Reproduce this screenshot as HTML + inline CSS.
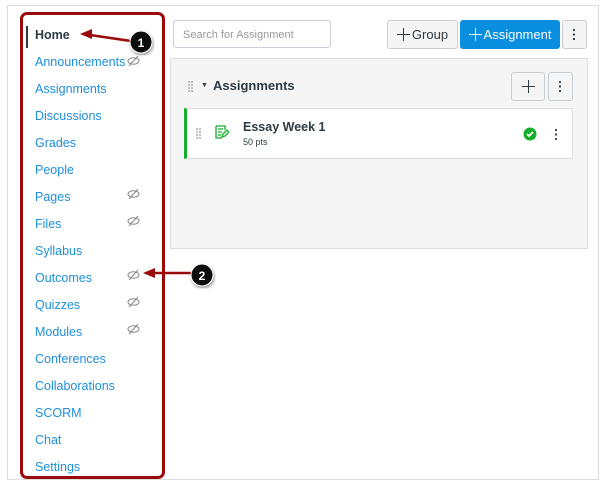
<!DOCTYPE html><html><head><style>
body{margin:0;width:608px;height:483px;background:#fff;font-family:"Liberation Sans",sans-serif;position:relative;overflow:hidden}
.a{position:absolute}
.frame{left:7px;top:5px;width:592px;height:475px;border:1px solid #ddd;box-sizing:border-box}
.red{left:20px;top:12px;width:145px;height:467px;border:3px solid #9b0a0a;border-radius:7px;box-sizing:border-box}
.nav{left:35px;font-size:12.5px;color:#1e8fdc;line-height:16px;top:27px}
.btn{border:1px solid #c7cdd1;background:#f5f5f5;border-radius:3px;box-sizing:border-box;color:#2d3b45;font-size:13px;display:flex;align-items:center;justify-content:center}
</style></head><body>
<div class="a frame"></div>
<div class="a" style="left:26px;top:26px;width:2px;height:22px;background:#2d3b45"></div>
<div class="a nav" style="color:#2d3b45;font-weight:bold">Home</div>
<div class="a nav" style="top:54px">Announcements</div>
<div class="a nav" style="top:81px">Assignments</div>
<div class="a nav" style="top:108px">Discussions</div>
<div class="a nav" style="top:135px">Grades</div>
<div class="a nav" style="top:162px">People</div>
<div class="a nav" style="top:189px">Pages</div>
<div class="a nav" style="top:216px">Files</div>
<div class="a nav" style="top:243px">Syllabus</div>
<div class="a nav" style="top:270px">Outcomes</div>
<div class="a nav" style="top:297px">Quizzes</div>
<div class="a nav" style="top:324px">Modules</div>
<div class="a nav" style="top:351px">Conferences</div>
<div class="a nav" style="top:378px">Collaborations</div>
<div class="a nav" style="top:405px">SCORM</div>
<div class="a nav" style="top:432px">Chat</div>
<div class="a nav" style="top:459px">Settings</div>
<svg class="a" style="left:0;top:0" width="608" height="483">
<defs><g id="eye" fill="none" stroke="#888" stroke-width="1"><ellipse cx="6.5" cy="5" rx="5.5" ry="3.3"/><line x1="2" y1="10" x2="11" y2="0"/></g>
<g id="drag" fill="#777"><circle cx="1" cy="1" r=".8"/><circle cx="4" cy="1" r=".8"/><circle cx="1" cy="4" r=".8"/><circle cx="4" cy="4" r=".8"/><circle cx="1" cy="7" r=".8"/><circle cx="4" cy="7" r=".8"/><circle cx="1" cy="10" r=".8"/><circle cx="4" cy="10" r=".8"/></g>
<g id="kb" fill="#2d3b45"><circle cx="1" cy="1" r="1.1"/><circle cx="1" cy="5.5" r="1.1"/><circle cx="1" cy="10" r="1.1"/></g></defs>
<use href="#eye" x="127" y="56"/><use href="#eye" x="127" y="189"/><use href="#eye" x="127" y="216"/>
<use href="#eye" x="127" y="270"/><use href="#eye" x="127" y="297"/><use href="#eye" x="127" y="324"/>
</svg>
<div class="a red"></div>
<div class="a" style="left:173px;top:20px;width:158px;height:28px;border:1px solid #ccd;border-radius:3px;box-sizing:border-box;font-size:11px;color:#999;padding:8px 9px">Search for Assignment</div>
<div class="a btn" style="left:387px;top:20px;width:71px;height:29px"><svg width="13" height="13" style="margin-right:2px"><path d="M6.5 0v13M0 6.5h13" stroke="#2d3b45" stroke-width="1"/></svg>Group</div>
<div class="a btn" style="left:460px;top:20px;width:100px;height:29px;background:#0a8ee0;border-color:#0a8ee0;color:#fff"><svg width="13" height="13" style="margin-right:2px"><path d="M6.5 0v13M0 6.5h13" stroke="#fff" stroke-width="1"/></svg>Assignment</div>
<div class="a btn" style="left:562px;top:20px;width:25px;height:29px"></div>
<div class="a" style="left:170px;top:58px;width:418px;height:191px;background:#f5f5f5;border:1px solid #ddd;box-sizing:border-box"></div>
<div class="a" style="left:201px;top:82px;font-size:7px;color:#2d3b45">▼</div>
<div class="a" style="left:213px;top:78px;font-size:13px;font-weight:bold;color:#2d3b45">Assignments</div>
<div class="a btn" style="left:511px;top:72px;width:34px;height:29px"><svg width="13" height="13"><path d="M6.5 0v13M0 6.5h13" stroke="#2d3b45" stroke-width="1"/></svg></div>
<div class="a btn" style="left:548px;top:72px;width:25px;height:29px"></div>
<div class="a" style="left:184px;top:108px;width:389px;height:51px;background:#fff;border:1px solid #ddd;border-left:3px solid #13ae2a;box-sizing:border-box"></div>
<svg class="a" style="left:215px;top:125px" width="14" height="14"><g fill="none" stroke="#13ae2a" stroke-width="1.3"><path d="M1 1h9v4M1 1v12h6"/><path d="M3 4h5M3 7h4M3 10h3"/><path d="M7 12l1-3 4-4 2 2-4 4z"/></g></svg>
<div class="a" style="left:243px;top:120px;font-size:12.5px;font-weight:bold;color:#2d3b45">Essay Week 1</div>
<div class="a" style="left:243px;top:137px;font-size:9px;color:#2d3b45">50 pts</div>
<svg class="a" style="left:523px;top:127px" width="14" height="14"><circle cx="7" cy="7" r="6.5" fill="#13ae2a"/><path d="M4 7l2 2 4-4" stroke="#fff" stroke-width="1.8" fill="none"/></svg>
<svg class="a" style="left:0;top:0" width="608" height="483">
<use href="#drag" x="188" y="81"/><use href="#drag" x="196" y="128"/>
<use href="#kb" x="573" y="29"/><use href="#kb" x="559" y="81"/><use href="#kb" x="555" y="129"/>
<defs><filter id="s"><feDropShadow dx="1" dy="2" stdDeviation="1.5" flood-opacity=".4"/></filter></defs>
<line x1="131" y1="41" x2="90" y2="35" stroke="#9b0a0a" stroke-width="2.5"/>
<path d="M80 34l12-5v10z" fill="#9b0a0a"/>
<circle cx="141" cy="42" r="11" fill="#111" stroke="#fff" stroke-width="1" filter="url(#s)"/>
<text x="141" y="47" fill="#fff" font-size="12" font-weight="bold" text-anchor="middle" font-family="Liberation Sans">1</text>
<line x1="192" y1="273" x2="152" y2="273" stroke="#9b0a0a" stroke-width="2.5"/>
<path d="M143 273l12-5v10z" fill="#9b0a0a"/>
<circle cx="202" cy="275" r="11" fill="#111" stroke="#fff" stroke-width="1" filter="url(#s)"/>
<text x="202" y="280" fill="#fff" font-size="12" font-weight="bold" text-anchor="middle" font-family="Liberation Sans">2</text>
</svg>
</body></html>
